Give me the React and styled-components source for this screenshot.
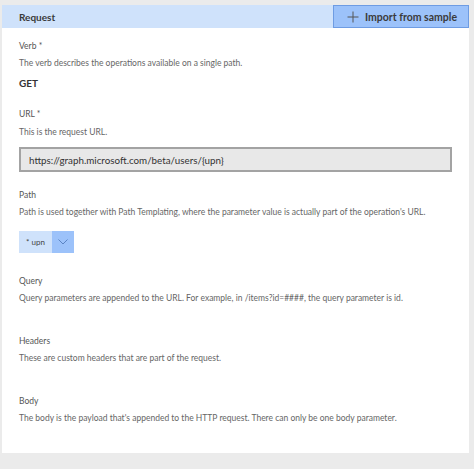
import React from 'react'
import styled, { createGlobalStyle } from 'styled-components'

const GlobalStyle = createGlobalStyle`
    html, body {
        margin: 0;
        padding: 0;
        background: #ebebeb;
    }
    body {
        font-family: Lato, "Open Sans", "Liberation Sans", sans-serif;
    }
`;

const Page = styled.div`
    width: 474px;
    height: 469px;
    box-sizing: border-box;
    padding: 5px 5px 16px 2px;
    background: #ebebeb;
`;

const Card = styled.div`
    height: 100%;
    background: #fff;
    display: flex;
    flex-direction: column;
`;

const Header = styled.div`
    height: 23px;
    display: flex;
    align-items: center;
    justify-content: space-between;
    background: #cfe2fb;
    padding-left: 17px;
`;

const Title = styled.span`
    font-size: 10px;
    font-weight: 700;
    color: #3a3a3a;
`;

const ImportButton = styled.button`
    height: 23px;
    width: 136px;
    box-sizing: border-box;
    display: flex;
    align-items: center;
    gap: 6px;
    padding: 0 0 0 13px;
    background: #9cc2fa;
    border: 1px solid #6e9ce3;
    font-family: inherit;
    font-size: 10.5px;
    font-weight: 700;
    color: #3a3a3a;
    white-space: nowrap;
`;

const Body = styled.div`
    padding: 11px 17px 0 17px;
`;

const Section = styled.div`
    margin-top: ${p => p.gap || 0}px;
`;

const Label = styled.div`
    font-size: 8.5px;
    line-height: 15px;
    color: #555;
`;

const Hint = styled.div`
    font-size: 8.5px;
    line-height: 15px;
    color: #666;
    margin-top: ${p => p.offset ?? 2}px;
    white-space: nowrap;
`;

const Verb = styled.div`
    margin-top: 3px;
    font-size: 10px;
    font-weight: 700;
    line-height: 18px;
    color: #333;
`;

const UrlBox = styled.div`
    margin-top: 7px;
    height: 25px;
    box-sizing: border-box;
    display: flex;
    align-items: center;
    padding-left: 8px;
    background: #e8e8e8;
    border: 2px solid #a3a3a3;
    font-size: 9.8px;
    color: #333;
`;

const Chip = styled.div`
    margin-top: 11px;
    display: inline-flex;
    height: 22px;
`;

const ChipText = styled.span`
    width: 33px;
    display: flex;
    align-items: center;
    justify-content: center;
    background: #cfe2fb;
    font-size: 8px;
    color: #444;
`;

const ChipToggle = styled.span`
    width: 22px;
    display: flex;
    align-items: center;
    justify-content: center;
    background: #9cc2fa;
`;

const Plus = () => (
    <svg width="12" height="12" viewBox="0 0 12 12">
        <path d="M6 0.5v11M0.5 6h11" stroke="#555" strokeWidth="1" fill="none" />
    </svg>
)

const Chevron = () => (
    <svg width="10" height="6" viewBox="0 0 10 6">
        <path d="M0.5 0.5l4.5 4.5 4.5-4.5" stroke="#5b84c4" strokeWidth="1" fill="none" />
    </svg>
)

const App = () => {
    return (
        <Page>
            <GlobalStyle />
            <Card>
                <Header>
                    <Title>Request</Title>
                    <ImportButton><Plus />Import from sample</ImportButton>
                </Header>
                <Body>
                    <Section>
                        <Label>Verb *</Label>
                        <Hint>The verb describes the operations available on a single path.</Hint>
                        <Verb>GET</Verb>
                    </Section>
                    <Section gap={15}>
                        <Label>URL *</Label>
                        <Hint offset={3}>This is the request URL.</Hint>
                        <UrlBox>https://graph.microsoft.com/beta/users/{'{upn}'}</UrlBox>
                    </Section>
                    <Section gap={16}>
                        <Label>Path</Label>
                        <Hint>Path is used together with Path Templating, where the parameter value is actually part of the operation's URL.</Hint>
                        <Chip>
                            <ChipText>* upn</ChipText>
                            <ChipToggle><Chevron /></ChipToggle>
                        </Chip>
                    </Section>
                    <Section gap={21}>
                        <Label>Query</Label>
                        <Hint>Query parameters are appended to the URL. For example, in /items?id=####, the query parameter is id.</Hint>
                    </Section>
                    <Section gap={28}>
                        <Label>Headers</Label>
                        <Hint>These are custom headers that are part of the request.</Hint>
                    </Section>
                    <Section gap={28}>
                        <Label>Body</Label>
                        <Hint>The body is the payload that's appended to the HTTP request. There can only be one body parameter.</Hint>
                    </Section>
                </Body>
            </Card>
        </Page>
    )
}

export default App
